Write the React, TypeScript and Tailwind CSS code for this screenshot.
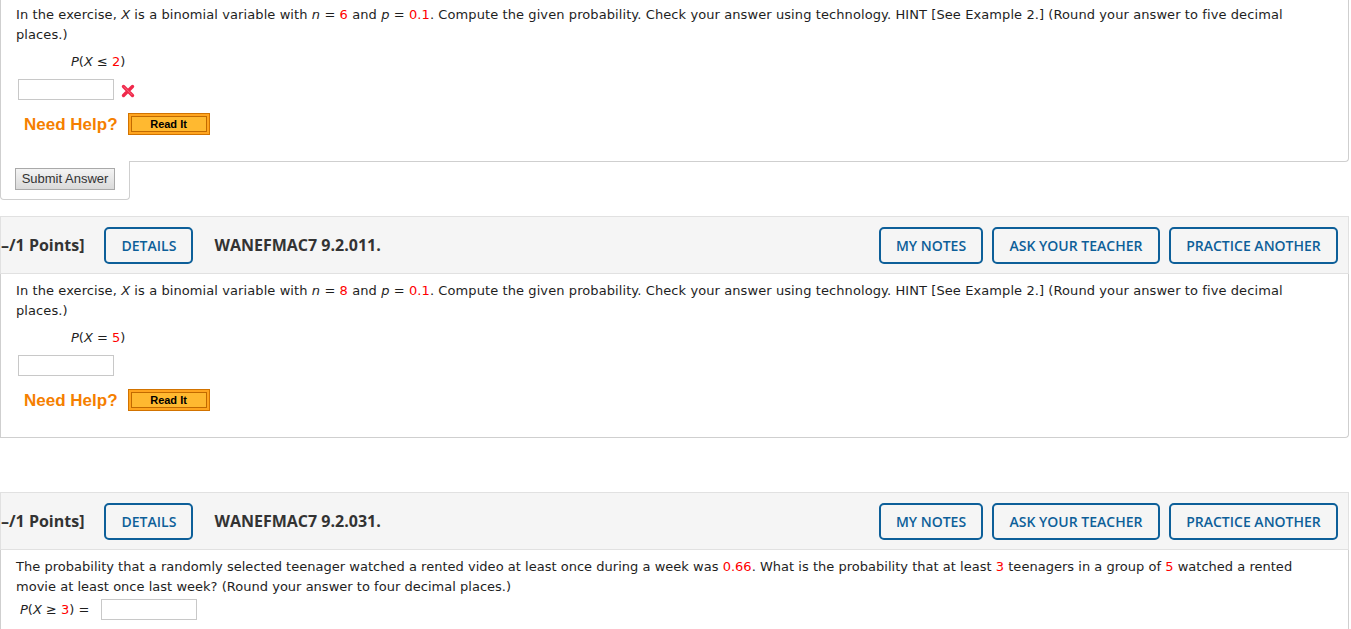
import React from 'react';

const qFont = { fontFamily: '"DejaVu Sans", Verdana, sans-serif' };
const hFont = { fontFamily: '"Open Sans", sans-serif' };
const aFont = { fontFamily: '"Liberation Sans", Arial, sans-serif' };

function Red({ children }: { children: React.ReactNode }) {
  return <span className="text-[#f00]">{children}</span>;
}

function V({ children }: { children: React.ReactNode }) {
  return <i>{children}</i>;
}

function Answer({ className = '' }: { className?: string }) {
  return <div className={`w-[96px] h-[21px] border border-[#c8c8c8] bg-white ${className}`} />;
}

function WrongMark() {
  return (
    <svg width="14" height="14" viewBox="0 0 14 14" className="ml-[7px] mt-[5px]">
      <path d="M2.5 2.5 L11.5 11.5 M11.5 2.5 L2.5 11.5" stroke="#f0294b" strokeWidth="3.4" strokeLinecap="round" />
      <path d="M3 2.8 L11 10.8" stroke="#ff8fa0" strokeWidth="0.8" strokeLinecap="round" opacity="0.7" />
    </svg>
  );
}

function NeedHelp() {
  return (
    <div className="flex items-center pl-[23px]" style={aFont}>
      <span className="text-[17px] font-bold text-[#f57f00] leading-none">Need Help?</span>
      <div className="ml-[10px] w-[82px] h-[22px] border border-[#d27300] bg-[#ffa51f] p-[2px]">
        <div className="h-full border border-[#c26a00] bg-[#ffb930] flex items-center justify-center text-[11px] font-bold text-black">
          Read It
        </div>
      </div>
    </div>
  );
}

function OutlineBtn({ label, w }: { label: string; w: string }) {
  return (
    <div
      className={`${w} h-[37px] border-2 border-[#0d5f99] rounded-[5px] flex items-center justify-center text-[14px] font-semibold text-[#0d5f99]`}
    >
      {label}
    </div>
  );
}

function Header({ code }: { code: string }) {
  return (
    <div className="h-[58px] bg-[#f5f5f5] border border-[#e1e1e1] flex items-center pr-[10px]" style={hFont}>
      <span className="text-[16px] font-bold text-[#333]">–/1 Points]</span>
      <div className="ml-[20px]">
        <OutlineBtn label="DETAILS" w="w-[89px]" />
      </div>
      <span className="ml-[21px] text-[16px] font-bold text-[#333]">{code}</span>
      <div className="ml-auto flex gap-[9px]">
        <OutlineBtn label="MY NOTES" w="w-[104px]" />
        <OutlineBtn label="ASK YOUR TEACHER" w="w-[168px]" />
        <OutlineBtn label="PRACTICE ANOTHER" w="w-[169px]" />
      </div>
    </div>
  );
}

function Intro({ n, p }: { n: string; p: string }) {
  return (
    <p className="text-[13px] leading-[20px] tracking-[0.09px] text-[#1e1e1e] pl-[15px] pr-[50px]" style={qFont}>
      In the exercise, <V>X</V> is a binomial variable with <V>n</V> = <Red>{n}</Red> and <V>p</V> ={' '}
      <Red>{p}</Red>. Compute the given probability. Check your answer using technology. HINT [See Example 2.]
      (Round your answer to five decimal places.)
    </p>
  );
}

export default function App() {
  return (
    <div className="w-[1349px] bg-white">
      {/* first question (top scrolled away) */}
      <div className="relative">
        <div className="border-x border-b border-[#cfcfcf] rounded-br-[4px] pt-[5px] pb-[26px]">
          <Intro n="6" p="0.1" />
          <div className="mt-[7px] pl-[70px] text-[13px] leading-[20px] text-[#1e1e1e]" style={qFont}>
            <V>P</V>(<V>X</V> ≤ <Red>2</Red>)
          </div>
          <div className="mt-[7px] pl-[17px] flex items-start">
            <Answer />
            <WrongMark />
          </div>
          <div className="mt-[13px]">
            <NeedHelp />
          </div>
        </div>
        <div className="relative -mt-px w-[130px] h-[39px] bg-white border-x border-b border-[#cfcfcf] rounded-b-[4px] pt-[7px] pl-[14px]">
          <div
            className="w-[100px] h-[22px] border border-[#a9a9a9] bg-gradient-to-b from-[#f4f4f4] to-[#dadada] flex items-center justify-center text-[13px] text-[#333]"
            style={aFont}
          >
            Submit Answer
          </div>
        </div>
      </div>

      {/* second question */}
      <div className="mt-[16px]">
        <Header code="WANEFMAC7 9.2.011." />
        <div className="border-x border-b border-[#cfcfcf] rounded-br-[4px] pt-[7px] pb-[26px]">
          <Intro n="8" p="0.1" />
          <div className="mt-[7px] pl-[70px] text-[13px] leading-[20px] text-[#1e1e1e]" style={qFont}>
            <V>P</V>(<V>X</V> = <Red>5</Red>)
          </div>
          <div className="mt-[7px] pl-[17px]">
            <Answer />
          </div>
          <div className="mt-[13px]">
            <NeedHelp />
          </div>
        </div>
      </div>

      {/* third question */}
      <div className="mt-[54px]">
        <Header code="WANEFMAC7 9.2.031." />
        <div className="border-x border-[#cfcfcf] pt-[7px] pb-[20px]">
          <p className="text-[13px] leading-[20px] tracking-[0.02px] text-[#1e1e1e] pl-[15px] pr-[40px]" style={qFont}>
            The probability that a randomly selected teenager watched a rented video at least once during a week was{' '}
            <Red>0.66</Red>. What is the probability that at least <Red>3</Red> teenagers in a group of <Red>5</Red>{' '}
            watched a rented movie at least once last week? (Round your answer to four decimal places.)
          </p>
          <div className="mt-[2px] pl-[19px] flex items-center text-[13px] text-[#1e1e1e]" style={qFont}>
            <span>
              <V>P</V>(<V>X</V> ≥ <Red>3</Red>) =
            </span>
            <Answer className="ml-[12px]" />
          </div>
        </div>
      </div>
    </div>
  );
}
